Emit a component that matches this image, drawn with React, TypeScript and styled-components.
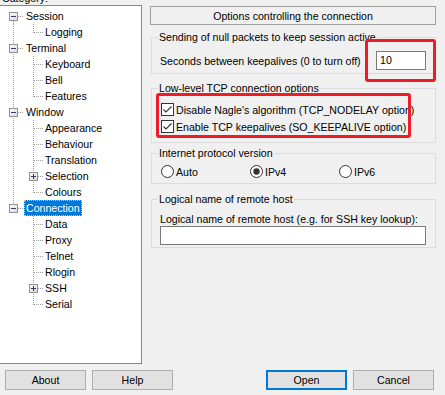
import React from "react";
import styled, { createGlobalStyle } from "styled-components";

const Global = createGlobalStyle`
  html, body { margin: 0; padding: 0; background: #f0f0f0; }
  #root { width: 445px; height: 395px; overflow: hidden; }
`;

const Page = styled.div`
  position: relative;
  width: 445px;
  height: 395px;
  overflow: hidden;
  background: #f0f0f0;
  font-family: "Liberation Sans", Arial, sans-serif;
  font-size: 10.6px;
  color: #000;
`;

const Main = styled.div`
  display: flex;
  align-items: flex-start;
`;

const TreeColumn = styled.div`
  display: flex;
  flex-direction: column;
  width: 143px;
  margin-left: -1px;
`;

const CategoryLabel = styled.div`
  height: 5px;
  overflow: hidden;
  padding-left: 3px;
  span {
    display: block;
    margin-top: -8px;
    line-height: 13px;
  }
`;

const TreeBox = styled.div`
  height: 355px;
  background: #fff;
  border: 1px solid #828790;
  padding-top: 2px;
  box-sizing: content-box;
`;

const TreeRow = styled.div`
  display: flex;
  align-items: center;
  height: 16px;
`;

const TreeLabel = styled.span<{ $selected?: boolean }>`
  display: inline-block;
  height: 16px;
  line-height: 16px;
  padding: 0 2px;
  box-sizing: border-box;
  white-space: nowrap;
  background: ${(p) => (p.$selected ? "#0078d7" : "transparent")};
  color: ${(p) => (p.$selected ? "#fff" : "#000")};
  outline: ${(p) => (p.$selected ? "1px dotted #f0c060" : "none")};
  outline-offset: -1px;
`;

const Panel = styled.div`
  display: flex;
  flex-direction: column;
  width: 286px;
  margin-left: 8px;
  margin-top: 6px;
`;

const Header = styled.div`
  height: 17px;
  border: 1px solid #a0a0a0;
  display: flex;
  align-items: center;
  justify-content: center;
`;

const Group = styled.fieldset<{ $top: number; $pb: number; $pt: number }>`
  margin: ${(p) => p.$top}px 0 0 1px;
  padding: ${(p) => p.$pt}px 9px ${(p) => p.$pb}px 6px;
  border: 1px solid #dcdcdc;
  min-inline-size: 0;
  display: flex;
  flex-direction: column;
`;

const Legend = styled.legend`
  padding: 0 1px;
  line-height: 13px;
`;

const KeepaliveRow = styled.div`
  display: flex;
  align-items: center;
  justify-content: space-between;
  padding-left: 2px;
`;

const TextInput = styled.div<{ $width?: number }>`
  width: ${(p) => (p.$width ? `${p.$width}px` : "auto")};
  height: 17px;
  border: 1px solid #7a7a7a;
  background: #fff;
  display: flex;
  align-items: center;
  padding-left: 3px;
  line-height: 17px;
`;

const CheckRow = styled.div`
  display: flex;
  align-items: center;
  height: 17px;
  padding-left: 3px;
  gap: 2px;
  white-space: nowrap;
`;

const RadioGrid = styled.div`
  display: grid;
  grid-template-columns: 89px 89px 89px;
  padding-left: 3px;
`;

const RadioItem = styled.div`
  display: flex;
  align-items: center;
  height: 17px;
  gap: 2px;
`;

const FieldText = styled.div`
  padding-left: 2px;
  line-height: 13px;
  margin-bottom: 0;
`;

const ButtonRow = styled.div`
  display: flex;
  align-items: center;
  margin-top: 6px;
  padding-left: 5px;
`;

const Button = styled.div<{ $default?: boolean; $gapLeft?: number }>`
  width: 81px;
  height: 20px;
  box-sizing: border-box;
  margin-left: ${(p) => p.$gapLeft ?? 0}px;
  background: #e1e1e1;
  border: ${(p) => (p.$default ? "2px solid #0078d7" : "1px solid #adadad")};
  display: flex;
  align-items: center;
  justify-content: center;
`;

const Annotation = styled.div<{ $x: number; $y: number; $w: number; $h: number }>`
  position: absolute;
  left: ${(p) => p.$x}px;
  top: ${(p) => p.$y}px;
  width: ${(p) => p.$w}px;
  height: ${(p) => p.$h}px;
  box-sizing: border-box;
  border: 3px solid #ee1c24;
  border-radius: 3px;
  pointer-events: none;
`;

type Node = {
  label: string;
  level: 0 | 1;
  expander?: "minus" | "plus";
  first?: boolean;
  last?: boolean;
  lastChild?: boolean;
  parentLast?: boolean;
  selected?: boolean;
};

const nodes: Node[] = [
  { label: "Session", level: 0, expander: "minus", first: true },
  { label: "Logging", level: 1, lastChild: true },
  { label: "Terminal", level: 0, expander: "minus" },
  { label: "Keyboard", level: 1 },
  { label: "Bell", level: 1 },
  { label: "Features", level: 1, lastChild: true },
  { label: "Window", level: 0, expander: "minus" },
  { label: "Appearance", level: 1 },
  { label: "Behaviour", level: 1 },
  { label: "Translation", level: 1 },
  { label: "Selection", level: 1, expander: "plus" },
  { label: "Colours", level: 1, lastChild: true },
  { label: "Connection", level: 0, expander: "minus", last: true, selected: true },
  { label: "Data", level: 1, parentLast: true },
  { label: "Proxy", level: 1, parentLast: true },
  { label: "Telnet", level: 1, parentLast: true },
  { label: "Rlogin", level: 1, parentLast: true },
  { label: "SSH", level: 1, parentLast: true, expander: "plus" },
  { label: "Serial", level: 1, parentLast: true, lastChild: true },
];

const LINE = "#a0a0a0";

const Expander: React.FC<{ cx: number; kind: "minus" | "plus" }> = ({ cx, kind }) => (
  <g>
    <defs>
      <linearGradient id="expg" x1="0" y1="0" x2="1" y2="1">
        <stop offset="0" stopColor="#ffffff" />
        <stop offset="1" stopColor="#d6d6d6" />
      </linearGradient>
    </defs>
    <rect x={cx - 4 + 0.5} y={4.5} width={8} height={8} fill="url(#expg)" stroke="#919191" />
    <line x1={cx - 2} y1={8.5} x2={cx + 3} y2={8.5} stroke="#3a3a5a" />
    {kind === "plus" && <line x1={cx + 0.5} y1={6} x2={cx + 0.5} y2={11} stroke="#3a3a5a" />}
  </g>
);

const Guides: React.FC<{ n: Node }> = ({ n }) => {
  const w = n.level === 0 ? 24 : 43;
  const dash = { stroke: LINE, strokeDasharray: "1 1", shapeRendering: "crispEdges" as const };
  return (
    <svg width={w} height={16} style={{ flex: "none", display: "block" }}>
      {n.level === 0 ? (
        <>
          <line x1={13.5} y1={n.first ? 9 : 0} x2={13.5} y2={n.last ? 8 : 16} {...dash} />
          <line x1={14} y1={8.5} x2={24} y2={8.5} {...dash} />
          {n.expander && <Expander cx={13} kind={n.expander} />}
        </>
      ) : (
        <>
          {!n.parentLast && <line x1={13.5} y1={0} x2={13.5} y2={16} {...dash} />}
          <line x1={33.5} y1={0} x2={33.5} y2={n.lastChild ? 9 : 16} {...dash} />
          <line x1={34} y1={8.5} x2={43} y2={8.5} {...dash} />
          {n.expander && <Expander cx={33} kind={n.expander} />}
        </>
      )}
    </svg>
  );
};

const CheckBox: React.FC = () => (
  <svg width={13} height={13} style={{ flex: "none", display: "block" }}>
    <rect x={0.5} y={0.5} width={12} height={12} fill="#fff" stroke="#333" />
    <path d="M2.5 6.5 L5 9 L10.5 3.5" fill="none" stroke="#333" strokeWidth={1.1} />
  </svg>
);

const Radio: React.FC<{ checked?: boolean }> = ({ checked }) => (
  <svg width={13} height={13} style={{ flex: "none", display: "block" }}>
    <circle cx={6.5} cy={6.5} r={6} fill="#fff" stroke="#333" />
    {checked && <circle cx={6.5} cy={6.5} r={3.2} fill="#333" />}
  </svg>
);

export default function App() {
  return (
    <Page>
      <Global />
      <Main>
        <TreeColumn>
          <CategoryLabel>
            <span>Category:</span>
          </CategoryLabel>
          <TreeBox>
            {nodes.map((n) => (
              <TreeRow key={n.label}>
                <Guides n={n} />
                <TreeLabel $selected={n.selected}>{n.label}</TreeLabel>
              </TreeRow>
            ))}
          </TreeBox>
        </TreeColumn>
        <Panel>
          <Header>Options controlling the connection</Header>
          <Group $top={6} $pt={7} $pb={3}>
            <Legend>Sending of null packets to keep session active</Legend>
            <KeepaliveRow>
              <span>Seconds between keepalives (0 to turn off)</span>
              <TextInput $width={45}>10</TextInput>
            </KeepaliveRow>
          </Group>
          <Group $top={8} $pt={6} $pb={7}>
            <Legend>Low-level TCP connection options</Legend>
            <CheckRow>
              <CheckBox />
              <span>Disable Nagle's algorithm (TCP_NODELAY option)</span>
            </CheckRow>
            <CheckRow>
              <CheckBox />
              <span>Enable TCP keepalives (SO_KEEPALIVE option)</span>
            </CheckRow>
          </Group>
          <Group $top={4} $pt={3} $pb={3}>
            <Legend>Internet protocol version</Legend>
            <RadioGrid>
              <RadioItem>
                <Radio />
                <span>Auto</span>
              </RadioItem>
              <RadioItem>
                <Radio checked />
                <span>IPv4</span>
              </RadioItem>
              <RadioItem>
                <Radio />
                <span>IPv6</span>
              </RadioItem>
            </RadioGrid>
          </Group>
          <Group $top={9} $pt={7} $pb={2}>
            <Legend>Logical name of remote host</Legend>
            <FieldText>Logical name of remote host (e.g. for SSH key lookup):</FieldText>
            <TextInput style={{ marginLeft: 2 }} />
          </Group>
        </Panel>
      </Main>
      <ButtonRow>
        <Button>About</Button>
        <Button $gapLeft={6}>Help</Button>
        <Button $gapLeft={93} $default>
          Open
        </Button>
        <Button $gapLeft={6}>Cancel</Button>
      </ButtonRow>
      <Annotation $x={365} $y={39} $w={71} $h={43} />
      <Annotation $x={156} $y={93} $w={255} $h={45} />
    </Page>
  );
}
